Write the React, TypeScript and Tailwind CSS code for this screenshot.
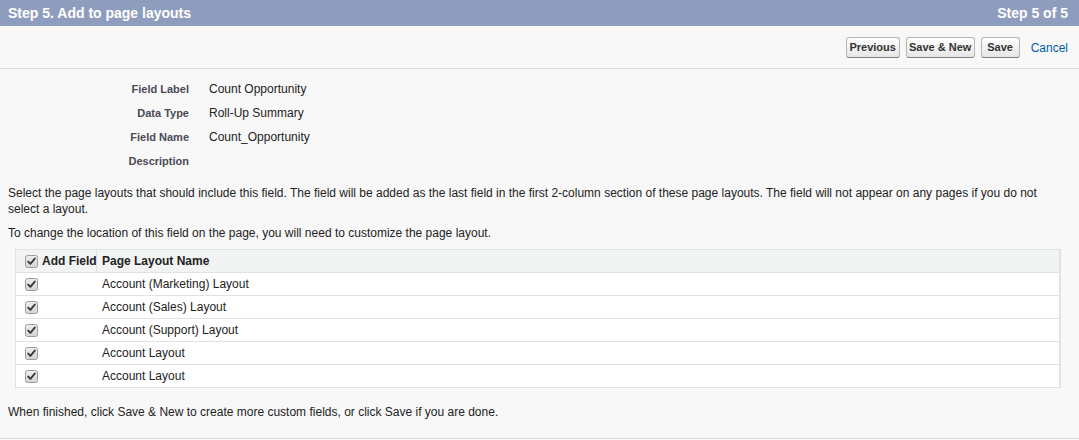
import React from 'react';

const fields = [
  { label: 'Field Label', value: 'Count Opportunity' },
  { label: 'Data Type', value: 'Roll-Up Summary' },
  { label: 'Field Name', value: 'Count_Opportunity' },
  { label: 'Description', value: '' },
];

const layouts = [
  'Account (Marketing) Layout',
  'Account (Sales) Layout',
  'Account (Support) Layout',
  'Account Layout',
  'Account Layout',
];

const CheckBox = () => (
  <svg width="13" height="13" viewBox="0 0 13 13" className="shrink-0">
    <defs>
      <linearGradient id="cb" x1="0" y1="0" x2="0" y2="1">
        <stop offset="0" stopColor="#eeeeee" />
        <stop offset="1" stopColor="#d4d4d4" />
      </linearGradient>
    </defs>
    <rect x="0.5" y="0.5" width="12" height="12" rx="2" fill="url(#cb)" stroke="#9c9c9c" />
    <path d="M3.2 6.6 L5.4 8.9 L9.8 3.6" fill="none" stroke="#3a3a3a" strokeWidth="1.9" strokeLinecap="round" strokeLinejoin="round" />
  </svg>
);

const Button = ({ children, className }: { children: React.ReactNode; className: string }) => (
  <button
    type="button"
    className={`h-[21px] rounded-[3px] border border-[#b5b5b5] border-b-[#7f7f7f] bg-gradient-to-b from-[#ffffff] to-[#e6e6e6] text-[11px] font-bold text-[#333] text-center whitespace-nowrap ${className}`}
  >
    {children}
  </button>
);

export default function App() {
  return (
    <div className="w-[1079px] h-[440px] bg-[#f8f8f8] text-[12px] text-[#222] font-['Liberation_Sans',Arial,sans-serif]">
      <div className="h-[26px] bg-[#8e9dbe] flex items-center justify-between px-[8px] text-white font-bold text-[14px]">
        <span>Step 5. Add to page layouts</span>
        <span className="pr-[3px]">Step 5 of 5</span>
      </div>

      <div className="h-[43px] border-b border-[#dcdcdc] flex items-center justify-end gap-[6px] pr-[11px] pt-[1px]">
        <Button className="w-[54px]">Previous</Button>
        <Button className="w-[69px]">Save &amp; New</Button>
        <Button className="w-[39px]">Save</Button>
        <a href="#" className="ml-[5px] text-[#015ba7]">Cancel</a>
      </div>

      <div className="mt-[8px]">
        {fields.map((f) => (
          <div key={f.label} className="grid grid-cols-[189px_1fr] gap-[20px] h-[24px] items-center">
            <span className="text-right text-[11px] font-bold text-[#4a4a56]">{f.label}</span>
            <span>{f.value}</span>
          </div>
        ))}
      </div>

      <div className="px-[8px] pr-[30px] mt-[12px] leading-[16px]">
        <p>
          Select the page layouts that should include this field. The field will be added as the last field in the first
          2-column section of these page layouts. The field will not appear on any pages if you do not select a layout.
        </p>
        <p className="mt-[8px]">To change the location of this field on the page, you will need to customize the page layout.</p>
      </div>

      <div className="ml-[15px] mr-[18px] mt-[8px] border-t border-l border-r-2 border-[#e0e3e5] bg-white">
        <div className="h-[23px] flex items-stretch border-b border-[#e0e3e5] bg-[#f2f3f3] font-bold">
          <div className="w-[81px] flex items-center gap-[4px] pl-[9px] border-r border-[#e0e3e5] whitespace-nowrap">
            <CheckBox />
            <span>Add Field</span>
          </div>
          <div className="flex items-center pl-[5px]">Page Layout Name</div>
        </div>
        {layouts.map((name, i) => (
          <div key={i} className="h-[23px] flex items-center border-b border-[#e0e3e5]">
            <div className="w-[81px] flex items-center pl-[9px]">
              <CheckBox />
            </div>
            <div className="pl-[5px]">{name}</div>
          </div>
        ))}
      </div>

      <div className="h-[51px] border-b border-[#dcdcdc] px-[8px] pt-[15px]">
        When finished, click Save &amp; New to create more custom fields, or click Save if you are done.
      </div>
    </div>
  );
}
